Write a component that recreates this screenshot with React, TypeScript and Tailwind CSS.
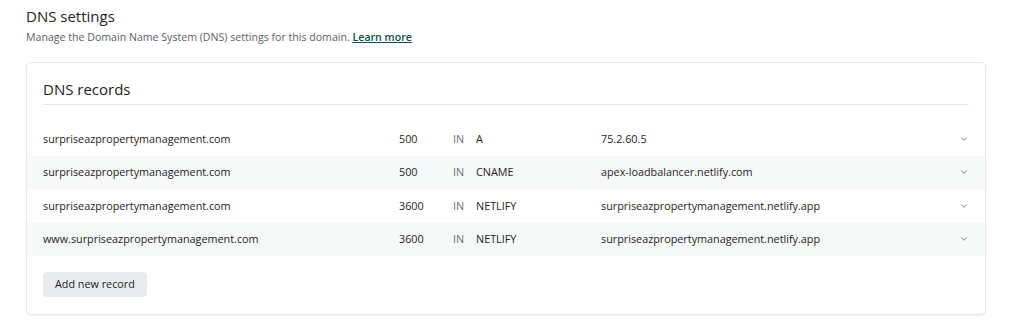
import { ChevronDown } from 'lucide-react'

const records = [
  { name: 'surpriseazpropertymanagement.com', ttl: '500', type: 'A', value: '75.2.60.5' },
  { name: 'surpriseazpropertymanagement.com', ttl: '500', type: 'CNAME', value: 'apex-loadbalancer.netlify.com' },
  { name: 'surpriseazpropertymanagement.com', ttl: '3600', type: 'NETLIFY', value: 'surpriseazpropertymanagement.netlify.app' },
  { name: 'www.surpriseazpropertymanagement.com', ttl: '3600', type: 'NETLIFY', value: 'surpriseazpropertymanagement.netlify.app' },
]

export default function App() {
  return (
    <div className="min-h-[323px] bg-white px-[26px] pt-[5px] font-['Open_Sans',sans-serif] text-[#1f2328]">
      <h2 className="text-[15px] leading-[22px] font-normal">DNS settings</h2>
      <p className="mt-[2px] text-[10.6px] leading-[16px] text-[#5b6168]">
        Manage the Domain Name System (DNS) settings for this domain.{' '}
        <a href="#" className="font-semibold text-[#0d4f4c] underline">Learn more</a>
      </p>

      <section className="mt-[17px] w-[960px] rounded-[5px] border border-[#e6e8ea] bg-white pb-[17px] shadow-[0_1px_2px_rgba(0,0,0,0.06)]">
        <div className="px-[16px] pt-[16px]">
          <h3 className="border-b border-[#e4e6e8] pb-[5px] text-[15px] leading-[20px] font-normal">DNS records</h3>
        </div>

        <div className="mt-[17px]">
          {records.map((r, i) => (
            <div
              key={i}
              className={`grid h-[33.5px] grid-cols-[356px_54px_23px_125px_1fr_10px] items-center px-[16px] text-[10.8px] ${i % 2 === 1 ? 'bg-[#f7f8f8]' : ''}`}
            >
              <span>{r.name}</span>
              <span>{r.ttl}</span>
              <span className="text-[#6b7177]">IN</span>
              <span>{r.type}</span>
              <span>{r.value}</span>
              <ChevronDown className="h-[10px] w-[10px] text-[#6f757b]" strokeWidth={2.2} />
            </div>
          ))}
        </div>

        <div className="mt-[14px] px-[16px]">
          <button className="h-[25px] rounded-[4px] bg-[#e9ebed] px-[12px] text-[10.8px] text-[#1f2328]">
            Add new record
          </button>
        </div>
      </section>
    </div>
  )
}
